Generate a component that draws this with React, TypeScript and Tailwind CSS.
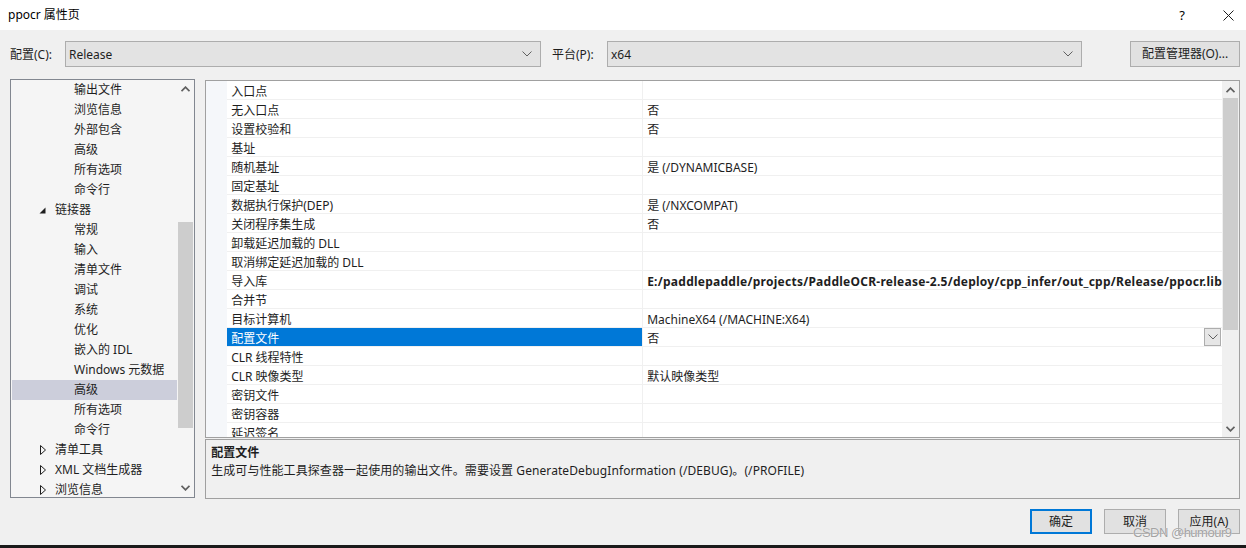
import React from "react";

const treeItems: { label: string; level: 1 | 2; icon?: "open" | "closed"; selected?: boolean }[] = [
  { label: "输出文件", level: 2 },
  { label: "浏览信息", level: 2 },
  { label: "外部包含", level: 2 },
  { label: "高级", level: 2 },
  { label: "所有选项", level: 2 },
  { label: "命令行", level: 2 },
  { label: "链接器", level: 1, icon: "open" },
  { label: "常规", level: 2 },
  { label: "输入", level: 2 },
  { label: "清单文件", level: 2 },
  { label: "调试", level: 2 },
  { label: "系统", level: 2 },
  { label: "优化", level: 2 },
  { label: "嵌入的 IDL", level: 2 },
  { label: "Windows 元数据", level: 2 },
  { label: "高级", level: 2, selected: true },
  { label: "所有选项", level: 2 },
  { label: "命令行", level: 2 },
  { label: "清单工具", level: 1, icon: "closed" },
  { label: "XML 文档生成器", level: 1, icon: "closed" },
  { label: "浏览信息", level: 1, icon: "closed" },
];

const rows: { name: string; value?: string; bold?: boolean; selected?: boolean }[] = [
  { name: "入口点" },
  { name: "无入口点", value: "否" },
  { name: "设置校验和", value: "否" },
  { name: "基址" },
  { name: "随机基址", value: "是 (/DYNAMICBASE)" },
  { name: "固定基址" },
  { name: "数据执行保护(DEP)", value: "是 (/NXCOMPAT)" },
  { name: "关闭程序集生成", value: "否" },
  { name: "卸载延迟加载的 DLL" },
  { name: "取消绑定延迟加载的 DLL" },
  {
    name: "导入库",
    value: "E:/paddlepaddle/projects/PaddleOCR-release-2.5/deploy/cpp_infer/out_cpp/Release/ppocr.lib",
    bold: true,
  },
  { name: "合并节" },
  { name: "目标计算机", value: "MachineX64 (/MACHINE:X64)" },
  { name: "配置文件", value: "否", selected: true },
  { name: "CLR 线程特性" },
  { name: "CLR 映像类型", value: "默认映像类型" },
  { name: "密钥文件" },
  { name: "密钥容器" },
  { name: "延迟签名" },
];

const Chevron = ({ up = false, className = "" }: { up?: boolean; className?: string }) => (
  <svg width="9" height="6" viewBox="0 0 9 6" className={className}>
    <path
      d={up ? "M0.5 5.2 L4.5 1.2 L8.5 5.2" : "M0.5 0.8 L4.5 4.8 L8.5 0.8"}
      fill="none"
      stroke="#606060"
      strokeWidth="1.8"
    />
  </svg>
);

const ThinChevron = () => (
  <svg width="10" height="6" viewBox="0 0 10 6">
    <path d="M0.5 0.5 L5 5 L9.5 0.5" fill="none" stroke="#606060" strokeWidth="1" />
  </svg>
);

const TreeIcon = ({ type }: { type: "open" | "closed" }) =>
  type === "open" ? (
    <svg width="7" height="7" viewBox="0 0 7 7">
      <path d="M6.5 0.5 L6.5 6.5 L0.5 6.5 Z" fill="#1e1e1e" />
    </svg>
  ) : (
    <svg width="6" height="10" viewBox="0 0 6 10">
      <path d="M0.5 0.5 L5.5 5 L0.5 9.5 Z" fill="none" stroke="#1e1e1e" strokeWidth="1" />
    </svg>
  );

const Select = ({ value, className = "" }: { value: string; className?: string }) => (
  <div
    className={`flex items-center justify-between h-[26px] border border-[#adadad] bg-[#e3e3e3] pl-[3px] pr-[8px] ${className}`}
  >
    <span className="pt-[1px]">{value}</span>
    <ThinChevron />
  </div>
);

const Button = ({ label, primary = false }: { label: string; primary?: boolean }) => (
  <div
    className={`flex items-center justify-center w-[62px] h-[25px] bg-[#e1e1e1] ${
      primary ? "border-2 border-[#0078d7]" : "border border-[#adadad]"
    }`}
  >
    {label}
  </div>
);

export default function App() {
  return (
    <div className="relative w-[1246px] h-[548px] overflow-hidden bg-[#f0f0f0] text-[12px] text-[#1e1e1e] font-['Noto_Sans','Noto_Sans_CJK_SC',sans-serif] leading-none">
      {/* title bar */}
      <div className="flex items-center h-[30px] bg-white pl-[8px]">
        <span className="text-[12px] text-black">ppocr 属性页</span>
        <span className="ml-auto mr-[38px] text-[13px] text-black">?</span>
        <svg width="11" height="11" viewBox="0 0 11 11" className="mr-[12px]">
          <path d="M0.5 0.5 L10.5 10.5 M10.5 0.5 L0.5 10.5" stroke="#1e1e1e" strokeWidth="1" />
        </svg>
      </div>

      <div className="flex flex-col pl-[10px] pr-[6px]">
        {/* config row */}
        <div className="flex items-center mt-[11px] h-[26px]">
          <span className="w-[55px] pt-[1px]">配置(C):</span>
          <Select value="Release" className="w-[476px]" />
          <span className="ml-[11px] w-[55px] pt-[1px]">平台(P):</span>
          <Select value="x64" className="w-[475px]" />
          <div className="ml-auto flex items-center justify-center w-[110px] h-[26px] -mt-[1px] border border-[#adadad] bg-[#e1e1e1]">
            配置管理器(O)...
          </div>
        </div>

        {/* main area */}
        <div className="flex mt-[12px] h-[421px]">
          {/* tree */}
          <div className="flex w-[186px] h-[419px] border border-[#828790] bg-[#f5f5f5]">
            <div className="flex-1 flex flex-col pl-[1px] overflow-hidden">
              {treeItems.map((t, i) => (
                <div
                  key={i}
                  className={`flex items-center h-[20px] shrink-0 ${t.selected ? "bg-[#cccedb]" : ""}`}
                >
                  <div className="w-[43px] flex justify-end pr-[9px]">
                    {t.icon && <TreeIcon type={t.icon} />}
                  </div>
                  <span className={t.level === 2 ? "pl-[19px]" : ""}>{t.label}</span>
                </div>
              ))}
            </div>
            <div className="flex flex-col w-[17px] items-center">
              <div className="h-[18px] flex items-center justify-center">
                <Chevron up />
              </div>
              <div className="h-[124px]" />
              <div className="w-[15px] h-[206px] bg-[#cdcdcd]" />
              <div className="flex-1" />
              <div className="h-[18px] flex items-center justify-center">
                <Chevron />
              </div>
            </div>
          </div>

          {/* right column */}
          <div className="flex-1 flex flex-col ml-[10px]">
            <div className="flex h-[358px] mt-[1px] border border-[#a0a0a0] bg-white overflow-hidden">
              <div className="w-[21px] bg-[#f5f7fa]" />
              <div className="flex-1 flex flex-col overflow-hidden">
                {rows.map((r, i) => (
                  <div key={i} className="flex h-[19px] shrink-0 border-b border-[#f0f0f0]">
                    <div
                      className={`flex items-center w-[415px] pl-[4px] pt-[3px] ${
                        r.selected ? "bg-[#0078d7] text-white" : ""
                      }`}
                    >
                      {r.name}
                    </div>
                    <div
                      className={`flex-1 flex items-center pl-[4px] border-l border-[#f0f0f0] whitespace-nowrap ${
                        r.bold ? "font-bold tracking-[0.26px]" : ""
                      }`}
                    >
                      <span className="pt-[3px]">{r.value}</span>
                      {r.selected && (
                        <div className="ml-auto mr-[1px] flex items-center justify-center w-[17px] h-[18px] border border-[#adadad] bg-[#e6e6e6]">
                          <ThinChevron />
                        </div>
                      )}
                    </div>
                  </div>
                ))}
              </div>
              <div className="flex flex-col w-[17px] items-center bg-[#f0f0f0]">
                <div className="h-[17px] flex items-center justify-center">
                  <Chevron up />
                </div>
                <div className="w-[15px] h-[232px] bg-[#cdcdcd]" />
                <div className="flex-1" />
                <div className="h-[17px] flex items-center justify-center">
                  <Chevron />
                </div>
              </div>
            </div>
            <div className="flex flex-col h-[60px] mt-[1px] border border-[#a0a0a0] bg-[#f0f0f0] pl-[5px] pt-[7px] gap-[6px]">
              <span className="font-bold">配置文件</span>
              <span className="tracking-[0.08px]">
                生成可与性能工具探查器一起使用的输出文件。需要设置 GenerateDebugInformation (/DEBUG)。(/PROFILE)
              </span>
            </div>
          </div>
        </div>

        {/* buttons */}
        <div className="flex justify-end gap-[12px] mt-[9px]">
          <Button label="确定" primary />
          <Button label="取消" />
          <Button label="应用(A)" />
        </div>
      </div>

      <div className="absolute left-0 right-0 bottom-0 h-[3px] bg-[#1a1a1a]" />
      <span className="absolute left-[1133px] top-[525px] whitespace-nowrap text-[13px] tracking-[-0.5px] leading-[16px] text-[#a3a3a3] font-['Liberation_Sans',sans-serif] [text-shadow:0_0_1px_#ffffff]">
        CSDN @humour9
      </span>
    </div>
  );
}
